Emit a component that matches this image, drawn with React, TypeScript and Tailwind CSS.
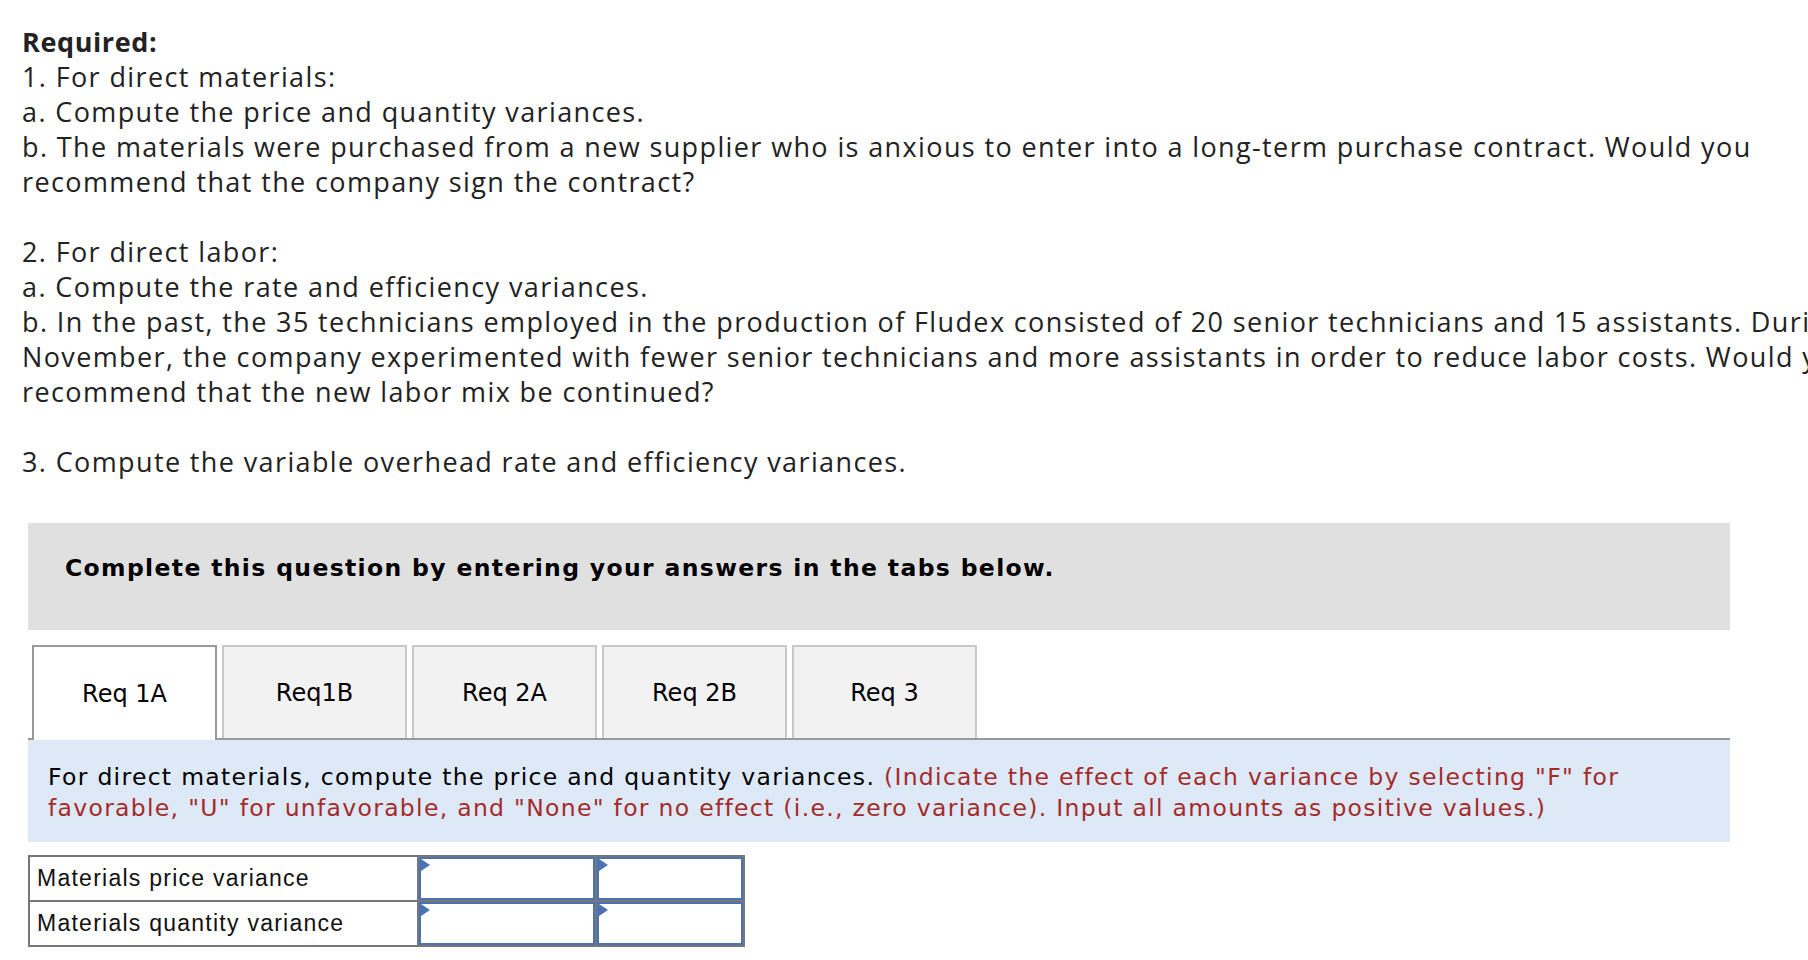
import React from "react";

const Flag = () => (
  <svg
    className="absolute left-0 top-0"
    width="9"
    height="12"
    viewBox="0 0 9 12"
  >
    <polygon points="0,0 9,6 0,12" fill="#4a72b4" />
  </svg>
);

const InputCell = () => (
  <div className="bg-white">
    <div className="relative h-full w-full border-2 border-[#4a72b4] bg-white">
      <Flag />
    </div>
  </div>
);

export default function App() {
  const tabs = ["Req 1A", "Req1B", "Req 2A", "Req 2B", "Req 3"];
  return (
    <div className="w-[1808px] h-[960px] overflow-hidden bg-white">
      <div
        className="w-[1885px] pl-[22px] pt-[24px] text-[27px] leading-[35px] tracking-[1.38px] text-[#222]"
        style={{ fontFamily: "'Open Sans', Lato, sans-serif" }}
      >
        <div className="font-bold tracking-[0.6px]">Required:</div>
        <div>1. For direct materials:</div>
        <div>a. Compute the price and quantity variances.</div>
        <div>
          b. The materials were purchased from a new supplier who is anxious to
          enter into a long-term purchase contract. Would you recommend that the
          company sign the contract?
        </div>
        <div className="h-[35px]" />
        <div>2. For direct labor:</div>
        <div>a. Compute the rate and efficiency variances.</div>
        <div>
          b. In the past, the 35 technicians employed in the production of
          Fludex consisted of 20 senior technicians and 15 assistants. During
          November, the company experimented with fewer senior technicians and
          more assistants in order to reduce labor costs. Would you recommend
          that the new labor mix be continued?
        </div>
        <div className="h-[35px]" />
        <div>3. Compute the variable overhead rate and efficiency variances.</div>
      </div>

      <div
        className="ml-[28px] mt-[44px] w-[1702px]"
        style={{ fontFamily: "'DejaVu Sans', Verdana, sans-serif" }}
      >
        <div className="h-[107px] bg-[#e0e0e0] pl-[37px] pt-[31px] text-[23.5px] font-bold leading-[28px] tracking-[1.35px] text-black">
          Complete this question by entering your answers in the tabs below.
        </div>

        <div className="mt-[15px] flex gap-[5px] border-b-2 border-[#999] pl-[4px]">
          {tabs.map((t, i) =>
            i === 0 ? (
              <div
                key={t}
                className="relative -mb-[2px] flex h-[95px] w-[185px] items-center justify-center border-2 border-b-0 border-[#999] bg-white text-[24px] text-black"
              >
                {t}
              </div>
            ) : (
              <div
                key={t}
                className="flex h-[93px] w-[185px] items-center justify-center border-2 border-b-0 border-[#c8c8c8] bg-[#f2f2f2] text-[24px] text-black"
              >
                {t}
              </div>
            )
          )}
        </div>

        <div className="h-[102px] bg-[#dde9f6] pl-[20px] pt-[22px] pr-[20px] text-[23.5px] leading-[31px] tracking-[1.3px] text-black">
          For direct materials, compute the price and quantity variances.{" "}
          <span className="text-[#a52a2a]">
            (Indicate the effect of each variance by selecting "F" for
            favorable, "U" for unfavorable, and "None" for no effect (i.e., zero
            variance). Input all amounts as positive values.)
          </span>
        </div>

        <div
          className="mt-[13px] grid w-[717px] grid-cols-[387px_176px_146px] grid-rows-[43px_43px] gap-[2px] bg-[#777] p-[2px]"
          style={{ fontFamily: "'Liberation Sans', Arial, sans-serif" }}
        >
          <div className="flex items-center bg-white pl-[7px] text-[23px] tracking-[1.25px] text-[#111]">
            Materials price variance
          </div>
          <InputCell />
          <InputCell />
          <div className="flex items-center bg-white pl-[7px] text-[23px] tracking-[1.25px] text-[#111]">
            Materials quantity variance
          </div>
          <InputCell />
          <InputCell />
        </div>
      </div>
    </div>
  );
}
